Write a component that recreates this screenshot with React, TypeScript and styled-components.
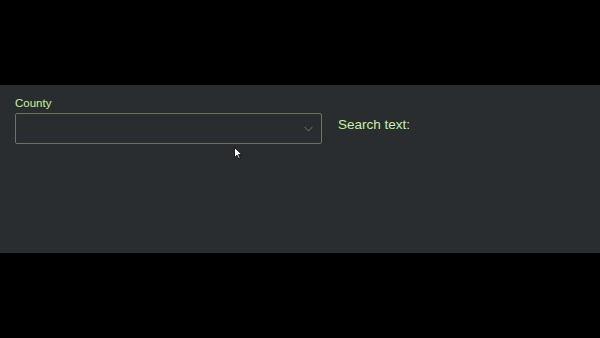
import React from 'react'
import styled, { createGlobalStyle } from 'styled-components'

const GlobalStyle = createGlobalStyle`
html, body {
    margin:0;
    padding:0;
    background:#000;
}
body {
    font-family:"Liberation Sans", Arial, sans-serif;
}
`

const Screen = styled.div`
width:600px;
height:338px;
display:flex;
flex-direction:column;
justify-content:center;
background:#000;
`

const Panel = styled.div`
height:168px;
background-color:#292d2f;
padding:11px 15px 0;
box-sizing:border-box;
display:flex;
align-items:flex-start;
gap:16px;
`

const Field = styled.div`
display:flex;
flex-direction:column;
width:307px;
position:relative;
`

const Label = styled.label`
font-size:11.5px;
color:#c8f0a6;
line-height:14px;
margin-bottom:3px;
`

const SelectBox = styled.div`
height:31px;
box-sizing:border-box;
border:1px solid #687560;
border-radius:2px;
display:flex;
align-items:center;
justify-content:flex-end;
padding-right:8px;
`

const SearchLabel = styled.span`
font-size:13.5px;
color:#c8f0a6;
margin-top:21px;
`

const Cursor = styled.svg`
position:absolute;
left:219px;
top:51px;
`

const Chevron = () => (
    <svg width="9" height="6" viewBox="0 0 9 6">
        <path d="M0.5 0.8 L4.5 5 L8.5 0.8" fill="none" stroke="#6e7570" strokeWidth="1" />
    </svg>
)

const App = () => {
    return (
        <>
            <GlobalStyle />
            <Screen>
                <Panel>
                    <Field>
                        <Label>County</Label>
                        <SelectBox>
                            <Chevron />
                        </SelectBox>
                        <Cursor width="9" height="13" viewBox="0 0 9 13">
                            <path d="M0.5 0.5 L0.5 10.5 L3 8.2 L4.8 12 L6.2 11.4 L4.5 7.6 L7.8 7.6 Z" fill="#fff" stroke="#000" strokeWidth="0.8" />
                        </Cursor>
                    </Field>
                    <SearchLabel>Search text:</SearchLabel>
                </Panel>
            </Screen>
        </>
    )
}

export default App
